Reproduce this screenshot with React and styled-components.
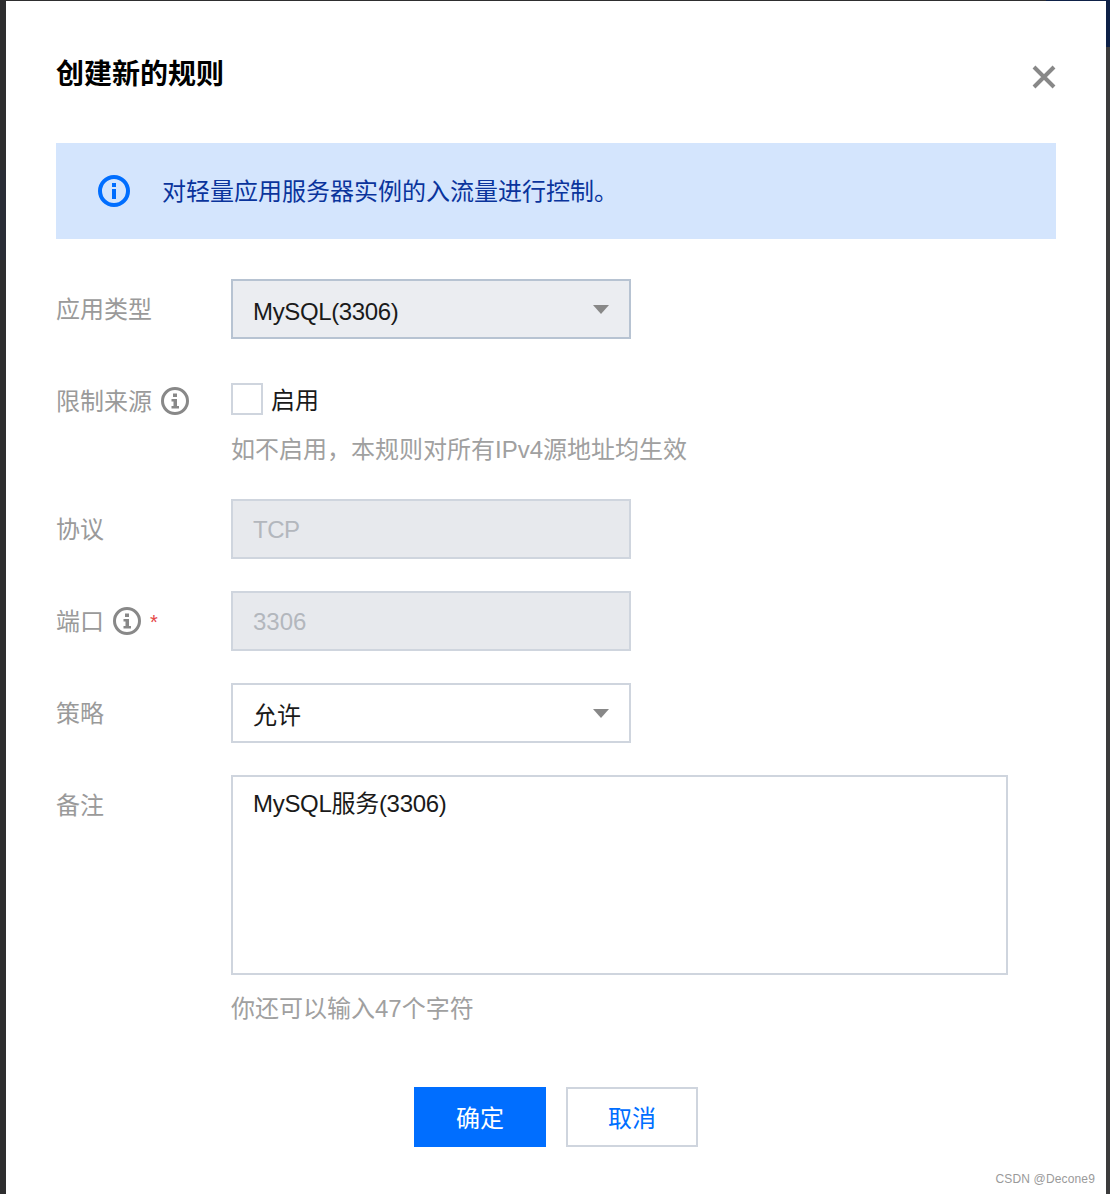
import React from 'react';
import styled, { createGlobalStyle } from 'styled-components';

const FONT = `"Liberation Sans", "Noto Sans CJK SC", sans-serif`;

const GlobalStyle = createGlobalStyle`
  html, body {
    margin: 0;
    padding: 0;
    background: #2e2e2f;
  }
  * {
    box-sizing: border-box;
  }
`;

// the dimmed page behind the dialog only shows as thin strips at the edges
const Page = styled.div`
  position: relative;
  width: 1110px;
  height: 1194px;
  padding: 1px 4px 0 6px;
  overflow: hidden;
  font-family: ${FONT};
  background:
    linear-gradient(#0e2147, #0e2147) right top / 64px 47px no-repeat,
    linear-gradient(#3b3b3c, #3b3b3c) right top / 4px 100% no-repeat,
    linear-gradient(#2a2d37, #2a2d37) left 170px / 6px 90px no-repeat,
    #2e2e2f;
`;

const Dialog = styled.div`
  position: relative;
  width: 1100px;
  height: 1193px;
  padding: 50px 50px 0;
  background: #fff;
`;

const Header = styled.div`
  display: flex;
  justify-content: space-between;
  align-items: flex-start;
  height: 92px;
`;

const Title = styled.h3`
  margin: 2px 0 0;
  font-size: 28px;
  line-height: 44px;
  font-weight: 700;
  color: #000;
`;

const CloseButton = styled.button`
  display: block;
  width: 24px;
  height: 24px;
  margin-top: 14px;
  padding: 0;
  border: 0;
  background: none;
`;

const Banner = styled.div`
  display: flex;
  align-items: center;
  gap: 32px;
  height: 96px;
  padding: 0 42px;
  margin-bottom: 40px;
  background: #d4e5fd;
  color: #0a349c;
  font-size: 24px;
`;

const BannerText = styled.span`
  margin-bottom: 4px;
`;

const Row = styled.div`
  display: flex;
  margin-bottom: 32px;
`;

const Label = styled.div`
  display: flex;
  align-items: center;
  gap: 9px;
  flex: 0 0 175px;
  height: 60px;
  font-size: 24px;
  color: #9a9a9a;
`;

const LabelText = styled.span`
  margin-bottom: 4px;
`;

const Required = styled.span`
  margin-top: 2px;
  font-size: 20px;
  line-height: 20px;
  color: #e54545;
`;

const Field = styled.div`
  display: flex;
  flex-direction: column;
`;

const Select = styled.div`
  display: flex;
  align-items: center;
  justify-content: space-between;
  width: 400px;
  height: 60px;
  padding: ${(p) => (p.$active ? '6px' : '0')} 20px 0;
  border: 2px solid ${(p) => (p.$active ? '#b7c3d2' : '#cfd5de')};
  background: ${(p) => (p.$active ? '#ebedf1' : '#fff')};
  color: #1a1a1a;
  font-size: 24px;
  letter-spacing: ${(p) => (p.$active ? '-0.36px' : '0')};
`;

const Caret = styled.span`
  width: 0;
  height: 0;
  margin-top: ${(p) => (p.$active ? '-6px' : '0')};
  border-left: 8px solid transparent;
  border-right: 8px solid transparent;
  border-top: 9px solid #888;
`;

const CheckLine = styled.label`
  display: flex;
  align-items: center;
  gap: 8px;
  height: 61px;
  padding-bottom: 5px;
  font-size: 24px;
  color: #1a1a1a;
`;

const CheckText = styled.span`
  margin-bottom: 2px;
`;

const CheckBox = styled.span`
  width: 32px;
  height: 32px;
  border: 2px solid #cfd5de;
  background: #fff;
`;

const Hint = styled.div`
  height: 35px;
  font-size: 24px;
  line-height: 36px;
  color: #a0a0a0;
`;

const DisabledInput = styled.input`
  display: block;
  width: 400px;
  height: 60px;
  padding: 2px 20px 0;
  border: 2px solid #cfd5de;
  border-radius: 0;
  outline: 0;
  background: #e7e9ed;
  font-family: ${FONT};
  font-size: 24px;
  letter-spacing: ${(p) => (p.$tight ? '-0.5px' : '0')};
  color: #b3b7bd;
  &:disabled {
    color: #b3b7bd;
    -webkit-text-fill-color: #b3b7bd;
    opacity: 1;
  }
`;

const TextArea = styled.textarea`
  display: block;
  width: 777px;
  height: 200px;
  padding: 11px 20px;
  border: 2px solid #cfd5de;
  border-radius: 0;
  outline: 0;
  resize: none;
  font-family: ${FONT};
  font-size: 24px;
  line-height: 32px;
  letter-spacing: -0.3px;
  color: #1a1a1a;
`;

const CounterHint = styled(Hint)`
  margin-top: 16px;
`;

const Footer = styled.div`
  display: flex;
  justify-content: center;
  gap: 20px;
  margin-top: 61px;
`;

const Button = styled.button`
  width: 132px;
  height: 60px;
  padding: 0 0 2px;
  border: 2px solid ${(p) => (p.$primary ? '#006eff' : '#cfd5de')};
  border-radius: 0;
  background: ${(p) => (p.$primary ? '#006eff' : '#fff')};
  color: ${(p) => (p.$primary ? '#fff' : '#006eff')};
  font-family: ${FONT};
  font-size: 24px;
`;

const Watermark = styled.div`
  position: absolute;
  right: 15px;
  bottom: 7px;
  font-size: 12px;
  line-height: 16px;
  letter-spacing: 0.15px;
  color: #9a9a9a;
`;

const BlueInfoIcon = () => (
  <svg width="32" height="32" viewBox="0 0 32 32" style={{ flex: 'none' }}>
    <circle cx="16" cy="16" r="14" fill="none" stroke="#006eff" strokeWidth="4" />
    <rect x="14" y="8" width="4" height="4" fill="#006eff" />
    <rect x="14" y="14" width="4" height="10" fill="#006eff" />
  </svg>
);

const GrayInfoIcon = () => (
  <svg width="28" height="28" viewBox="0 0 28 28" style={{ flex: 'none' }}>
    <circle cx="14" cy="14" r="12.5" fill="none" stroke="#888" strokeWidth="3" />
    <rect x="12" y="6.5" width="4" height="3.5" fill="#888" />
    <path d="M10.5 12h5.5v7h2v2.5h-7.5V19h2v-4.5h-2z" fill="#888" />
  </svg>
);

const CloseIcon = () => (
  <svg width="24" height="24" viewBox="0 0 24 24">
    <path d="M2 2l20 20M22 2L2 22" fill="none" stroke="#888" strokeWidth="4" />
  </svg>
);

const App = () => {
  return (
    <Page>
      <GlobalStyle />
      <Dialog>
        <Header>
          <Title>创建新的规则</Title>
          <CloseButton aria-label="关闭">
            <CloseIcon />
          </CloseButton>
        </Header>
        <Banner>
          <BlueInfoIcon />
          <BannerText>对轻量应用服务器实例的入流量进行控制。</BannerText>
        </Banner>
        <Row>
          <Label>
            <LabelText>应用类型</LabelText>
          </Label>
          <Select $active>
            MySQL(3306)
            <Caret $active />
          </Select>
        </Row>
        <Row>
          <Label>
            <LabelText>限制来源</LabelText>
            <GrayInfoIcon />
          </Label>
          <Field>
            <CheckLine>
              <CheckBox />
              <CheckText>启用</CheckText>
            </CheckLine>
            <Hint>如不启用，本规则对所有IPv4源地址均生效</Hint>
          </Field>
        </Row>
        <Row>
          <Label>
            <LabelText>协议</LabelText>
          </Label>
          <DisabledInput $tight disabled value="TCP" />
        </Row>
        <Row>
          <Label>
            <LabelText>端口</LabelText>
            <GrayInfoIcon />
            <Required>*</Required>
          </Label>
          <DisabledInput disabled value="3306" />
        </Row>
        <Row>
          <Label>
            <LabelText>策略</LabelText>
          </Label>
          <Select>
            允许
            <Caret />
          </Select>
        </Row>
        <Row>
          <Label>
            <LabelText>备注</LabelText>
          </Label>
          <Field>
            <TextArea readOnly value="MySQL服务(3306)" />
            <CounterHint>你还可以输入47个字符</CounterHint>
          </Field>
        </Row>
        <Footer>
          <Button $primary>确定</Button>
          <Button>取消</Button>
        </Footer>
      </Dialog>
      <Watermark>CSDN @Decone9</Watermark>
    </Page>
  );
};

export default App;
